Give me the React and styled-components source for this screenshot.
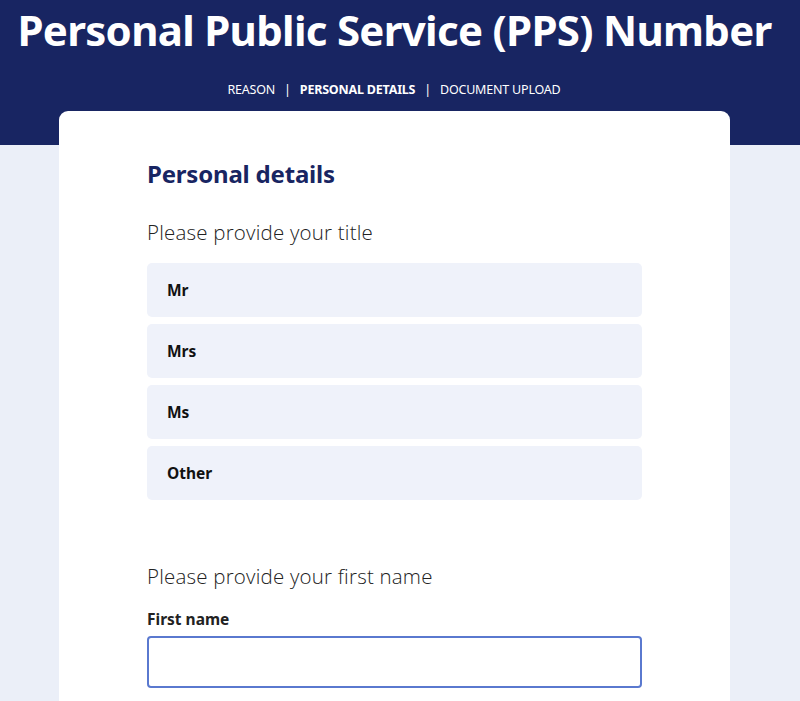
import React from "react";
import styled, { createGlobalStyle } from "styled-components";

const Global = createGlobalStyle`
  html, body { margin: 0; padding: 0; background: #ebeff8; }
  body { font-family: "Noto Sans", "Open Sans", sans-serif; }
  * { box-sizing: border-box; }
`;

const Page = styled.div`
  min-height: 701px;
  background: linear-gradient(#182562 0, #182562 145px, #ebeff8 145px);
  display: flex;
  flex-direction: column;
  align-items: center;
`;

const Title = styled.h1`
  margin: 0;
  padding-top: 4px;
  color: #fff;
  font-family: "Noto Sans", sans-serif;
  font-weight: 700;
  font-size: 42px;
  line-height: 52px;
  letter-spacing: -0.7px;
  text-align: center;
  width: 100%;
  padding-right: 11px;
`;

const Steps = styled.nav`
  margin-top: 26px;
  display: flex;
  gap: 9px;
  color: #fff;
  font-family: "Noto Sans", sans-serif;
  font-size: 12.5px;
  letter-spacing: -0.2px;
  line-height: 16px;
  padding-right: 12px;
`;

const Step = styled.span`
  font-weight: ${(p) => (p.$active ? 700 : 400)};
`;

const Card = styled.main`
  margin-top: 13px;
  width: 671px;
  margin-right: 11px;
  background: #fff;
  border-radius: 9px;
  padding: 48px 88px 40px;
  display: flex;
  flex-direction: column;
`;

const Heading = styled.h2`
  margin: 0;
  color: #182562;
  font-family: "Noto Sans", sans-serif;
  font-weight: 700;
  font-size: 24px;
  line-height: 30px;
  letter-spacing: -0.2px;
`;

const Question = styled.p`
  margin: ${(p) => p.$top}px 0 0;
  color: #222;
  font-family: "Open Sans", sans-serif;
  font-weight: 300;
  font-size: 20.5px;
  letter-spacing: 0.2px;
  line-height: 26px;
`;

const Options = styled.div`
  margin-top: 18px;
  display: flex;
  flex-direction: column;
  gap: 7px;
`;

const Option = styled.button`
  all: unset;
  height: 54px;
  display: flex;
  align-items: center;
  padding-left: 20px;
  background: #eff2fa;
  border-radius: 5px;
  font-family: "Noto Sans", sans-serif;
  font-weight: 700;
  font-size: 15.5px;
  color: #111;
  cursor: pointer;
`;

const Label = styled.label`
  margin-top: 20px;
  font-family: "Noto Sans", sans-serif;
  font-weight: 700;
  font-size: 15.5px;
  line-height: 20px;
  color: #222;
`;

const Input = styled.input`
  margin-top: 7px;
  height: 52px;
  width: 100%;
  border: 2px solid #5a79cf;
  border-radius: 4px;
  font-size: 16px;
  padding: 0 12px;
  outline: none;
`;

export default function App() {
  return (
    <>
      <Global />
      <Page>
        <Title>Personal Public Service (PPS) Number</Title>
        <Steps>
          <Step>REASON</Step>
          <Step>|</Step>
          <Step $active>PERSONAL DETAILS</Step>
          <Step>|</Step>
          <Step>DOCUMENT UPLOAD</Step>
        </Steps>
        <Card>
          <Heading>Personal details</Heading>
          <Question $top={30}>Please provide your title</Question>
          <Options>
            {["Mr", "Mrs", "Ms", "Other"].map((t) => (
              <Option key={t}>{t}</Option>
            ))}
          </Options>
          <Question $top={63}>Please provide your first name</Question>
          <Label htmlFor="fn">First name</Label>
          <Input id="fn" />
        </Card>
      </Page>
    </>
  );
}
